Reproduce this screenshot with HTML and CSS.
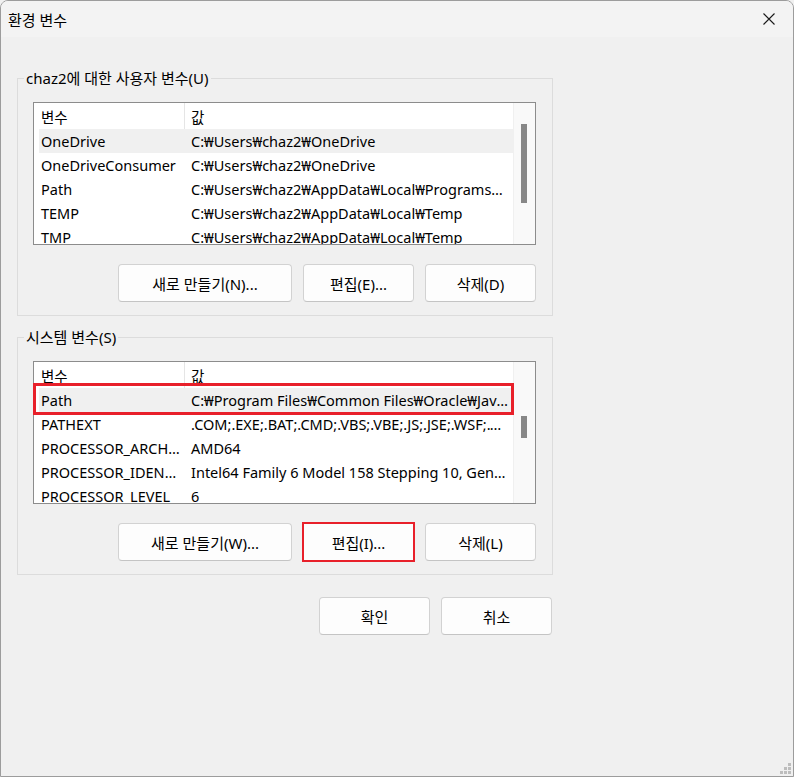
FILE: index.html
```html
<!DOCTYPE html>
<html lang="ko">
<head>
    <meta charset="UTF-8">
    <meta name="viewport" content="width=device-width, initial-scale=1.0">
    <title>환경 변수</title>
    <link rel="stylesheet" href="styles.css">
</head>
<body>
    <div class="window">
        <div class="titlebar">
            <span class="title">환경 변수</span>
            <button class="close-btn" aria-label="닫기">
                <svg width="12" height="12" viewBox="0 0 12 12">
                    <path d="M0.5 0.5 L11.5 11.5 M11.5 0.5 L0.5 11.5" stroke="#1a1a1a" stroke-width="1.1" fill="none"/>
                </svg>
            </button>
        </div>

        <div class="content">
            <!-- 사용자 변수 -->
            <fieldset class="group group-user">
                <legend>chaz2에 대한 사용자 변수(U)</legend>
                <div class="list">
                    <div class="list-body">
                        <div class="list-row list-header">
                            <div class="cell name">변수</div>
                            <div class="cell value">값</div>
                        </div>
                        <div class="list-row selected">
                            <div class="cell name">OneDrive</div>
                            <div class="cell value">C:₩Users₩chaz2₩OneDrive</div>
                        </div>
                        <div class="list-row">
                            <div class="cell name">OneDriveConsumer</div>
                            <div class="cell value">C:₩Users₩chaz2₩OneDrive</div>
                        </div>
                        <div class="list-row">
                            <div class="cell name">Path</div>
                            <div class="cell value">C:₩Users₩chaz2₩AppData₩Local₩Programs₩Python₩Python311₩Scripts₩</div>
                        </div>
                        <div class="list-row">
                            <div class="cell name">TEMP</div>
                            <div class="cell value">C:₩Users₩chaz2₩AppData₩Local₩Temp</div>
                        </div>
                        <div class="list-row">
                            <div class="cell name">TMP</div>
                            <div class="cell value">C:₩Users₩chaz2₩AppData₩Local₩Temp</div>
                        </div>
                    </div>
                    <div class="scrollbar">
                        <div class="thumb thumb-user"></div>
                    </div>
                </div>
                <div class="button-row">
                    <button class="btn btn-wide">새로 만들기(N)...</button>
                    <button class="btn">편집(E)...</button>
                    <button class="btn">삭제(D)</button>
                </div>
            </fieldset>

            <!-- 시스템 변수 -->
            <fieldset class="group group-system">
                <legend>시스템 변수(S)</legend>
                <div class="list">
                    <div class="list-body">
                        <div class="list-row list-header">
                            <div class="cell name">변수</div>
                            <div class="cell value">값</div>
                        </div>
                        <div class="list-row selected">
                            <div class="cell name">Path</div>
                            <div class="cell value">C:₩Program Files₩Common Files₩Oracle₩Java₩javapath</div>
                        </div>
                        <div class="list-row">
                            <div class="cell name">PATHEXT</div>
                            <div class="cell value">.COM;.EXE;.BAT;.CMD;.VBS;.VBE;.JS;.JSE;.WSF;.WSH;.MSC</div>
                        </div>
                        <div class="list-row">
                            <div class="cell name">PROCESSOR_ARCHITECTURE</div>
                            <div class="cell value">AMD64</div>
                        </div>
                        <div class="list-row">
                            <div class="cell name">PROCESSOR_IDENTIFIER</div>
                            <div class="cell value">Intel64 Family 6 Model 158 Stepping 10, GenuineIntel</div>
                        </div>
                        <div class="list-row">
                            <div class="cell name">PROCESSOR_LEVEL</div>
                            <div class="cell value">6</div>
                        </div>
                    </div>
                    <div class="scrollbar">
                        <div class="thumb thumb-system"></div>
                    </div>
                    <div class="highlight-box"></div>
                </div>
                <div class="button-row">
                    <button class="btn btn-wide">새로 만들기(W)...</button>
                    <button class="btn marked">편집(I)...</button>
                    <button class="btn">삭제(L)</button>
                </div>
            </fieldset>

            <div class="dialog-buttons">
                <button class="btn">확인</button>
                <button class="btn">취소</button>
            </div>
        </div>

        <svg class="grip" width="14" height="14" viewBox="0 0 14 14">
            <rect x="10" y="2" width="3" height="3" fill="#bdbdbd"/>
            <rect x="6" y="6" width="3" height="3" fill="#bdbdbd"/>
            <rect x="10" y="6" width="3" height="3" fill="#bdbdbd"/>
            <rect x="2" y="10" width="3" height="3" fill="#bdbdbd"/>
            <rect x="6" y="10" width="3" height="3" fill="#bdbdbd"/>
            <rect x="10" y="10" width="3" height="3" fill="#bdbdbd"/>
        </svg>
    </div>
</body>
</html>
```

FILE: styles.css
```css
body {
    margin: 0;
    background: #f0f0f0;
    font-family: "Noto Sans", "Noto Sans CJK KR", sans-serif;
    font-size: 15px;
    color: #000;
}

.window {
    position: relative;
    width: 794px;
    height: 777px;
    box-sizing: border-box;
    border: 1px solid #9c9c9c;
    border-radius: 8px 8px 0 0;
    background: #f0f0f0;
    overflow: hidden;
}

.titlebar {
    height: 36px;
    display: flex;
    align-items: center;
    justify-content: space-between;
    padding-left: 7px;
    background: #f3f3f3;
}

.title {
    font-size: 15px;
}

.close-btn {
    width: 46px;
    height: 36px;
    display: flex;
    align-items: center;
    justify-content: center;
    background: none;
    border: none;
    padding: 0;
    margin-right: 1px;
}

.content {
    padding: 0 16px;
}

.group {
    width: 536px;
    box-sizing: border-box;
    margin: 0;
    border: 1px solid #dcdcdc;
    padding: 14px 16px 13px 15px;
    min-width: 0;
}

.group-user {
    margin-top: 31px;
}

.group-system {
    margin-top: 11px;
}

.group legend {
    margin-left: -9px;
    padding: 0 2px;
    line-height: 20px;
    color: #000;
}

.list {
    position: relative;
    height: 143px;
    box-sizing: border-box;
    border: 1px solid #8c8c8c;
    background: #fff;
    display: flex;
    font-size: 14.5px;
}

.list-body {
    flex: 1;
    overflow: hidden;
    padding-left: 5px;
}

.list-row {
    display: flex;
    height: 24px;
    align-items: center;
}

.list-row.selected {
    background: #f0f0f0;
}

.list-header {
    height: 26px;
}

.cell {
    white-space: nowrap;
    overflow: hidden;
    text-overflow: ellipsis;
    box-sizing: border-box;
}

.cell.name {
    width: 146px;
    padding: 0 5px 0 2px;
}

.cell.value {
    flex: 1;
    padding: 0 4px 0 6px;
}

.list-header .cell {
    height: 100%;
    display: flex;
    align-items: center;
}

.list-header .cell.name {
    border-right: 1px solid #e5e5e5;
}

.scrollbar {
    width: 21px;
    background: #f9f9f9;
    border-left: 1px solid #f0f0f0;
}

.thumb {
    width: 6px;
    margin-left: 7px;
    background: #878787;
}

.thumb-user {
    margin-top: 21px;
    height: 79px;
}

.thumb-system {
    margin-top: 54px;
    height: 22px;
}

.highlight-box {
    position: absolute;
    left: -1px;
    top: 21px;
    width: 481px;
    height: 32px;
    box-sizing: border-box;
    border: 3px solid #e8202a;
}

.button-row {
    display: flex;
    justify-content: flex-end;
    gap: 11px;
    margin-top: 19px;
}

.btn {
    width: 111px;
    height: 38px;
    box-sizing: border-box;
    background: #fdfdfd;
    border: 1px solid #d2d2d2;
    border-bottom-color: #c4c4c4;
    border-radius: 4px;
    font-family: inherit;
    font-size: 15px;
    color: #000;
    padding: 0;
}

.btn-wide {
    width: 174px;
}

.btn.marked {
    border-color: #e8202a;
    outline: 2px solid #e8202a;
    outline-offset: -1px;
    border-radius: 0;
}

.dialog-buttons {
    width: 535px;
    display: flex;
    justify-content: flex-end;
    gap: 11px;
    margin-top: 22px;
}

.grip {
    position: absolute;
    right: 1px;
    bottom: 1px;
}
```
